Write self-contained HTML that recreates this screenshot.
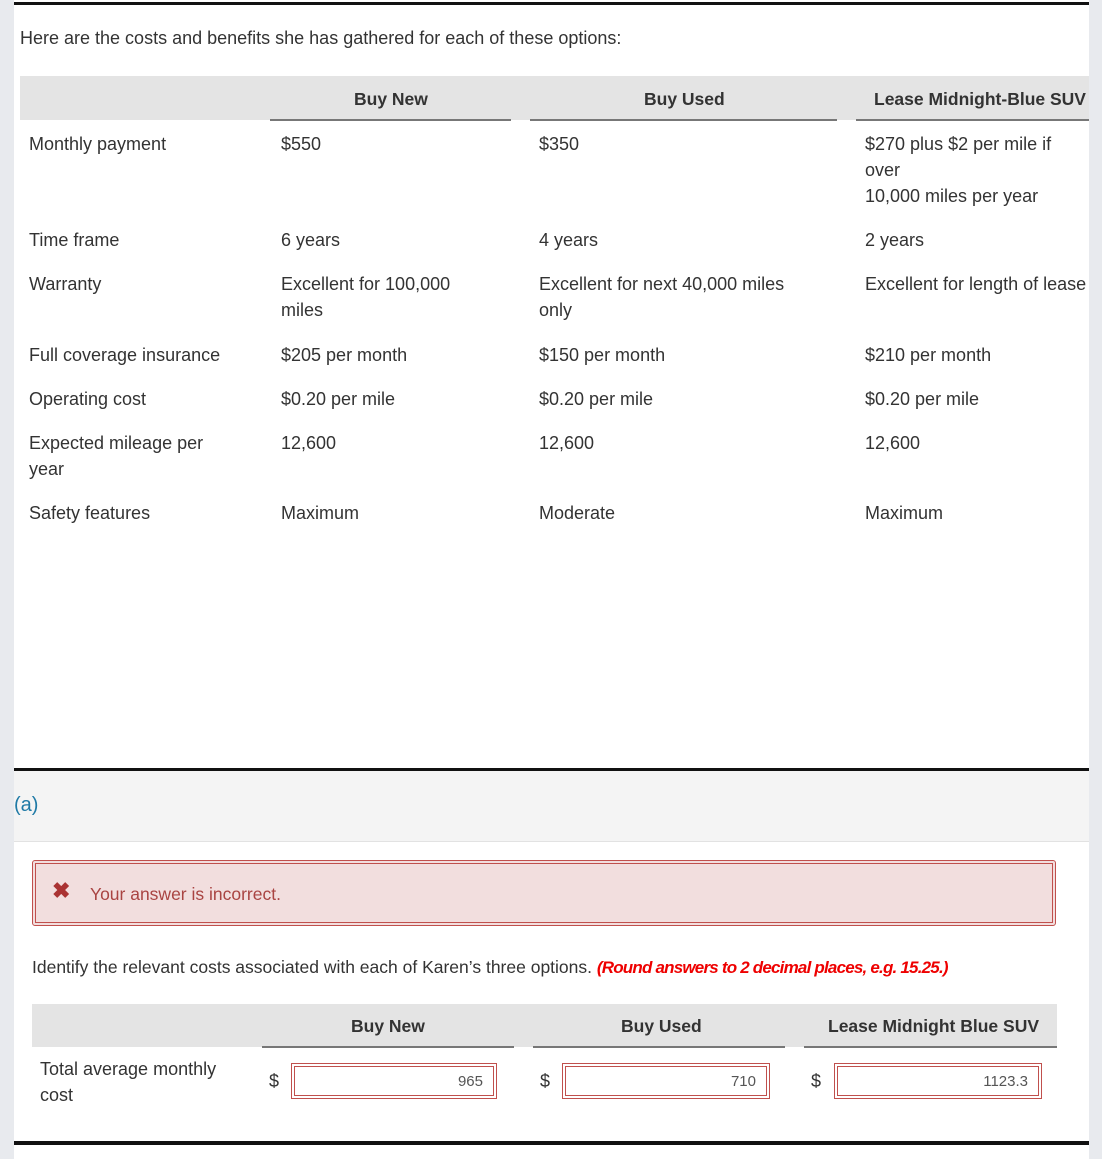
<!DOCTYPE html><html><head><style>
body{margin:0;width:1102px;height:1159px;position:relative;background:#fff;font-family:"Liberation Sans",sans-serif;color:#333;font-size:18px;overflow:hidden}
.a{position:absolute;white-space:nowrap;line-height:26px}
.h{font-weight:bold;color:#333;font-size:17.5px}
.ul{position:absolute;height:2px;background:#777}
.inp{position:absolute;height:30px;border:1px solid #c0504d;outline:1px solid #c0504d;outline-offset:2px;background:#fff;font-size:15px;color:#555;text-align:right;line-height:30px;padding-right:10px;box-sizing:border-box}
</style></head><body>
<div style="position:absolute;left:0;top:0;width:14px;height:1159px;background:#e8eaee"></div>
<div style="position:absolute;left:1089px;top:0;width:13px;height:1159px;background:#e8eaee"></div>
<div style="position:absolute;left:14px;top:2px;width:1075px;height:3px;background:#111"></div>
<div class="a" style="left:20px;top:25px">Here are the costs and benefits she has gathered for each of these options:</div>
<div style="position:absolute;left:20px;top:76px;width:1069px;height:44px;background:#e4e4e4"></div>
<div class="a h" style="left:354px;top:86px">Buy New</div>
<div class="a h" style="left:644px;top:86px">Buy Used</div>
<div class="a h" style="left:874px;top:86px">Lease Midnight-Blue SUV</div>
<div class="ul" style="left:270px;top:119px;width:241px"></div>
<div class="ul" style="left:530px;top:119px;width:307px"></div>
<div class="ul" style="left:856px;top:119px;width:233px"></div>
<div class="a" style="left:29px;top:131px">Monthly payment</div>
<div class="a" style="left:281px;top:131px">$550</div>
<div class="a" style="left:539px;top:131px">$350</div>
<div class="a" style="left:865px;top:131px">$270 plus $2 per mile if<br>over<br>10,000 miles per year</div>
<div class="a" style="left:29px;top:227px">Time frame</div>
<div class="a" style="left:281px;top:227px">6 years</div>
<div class="a" style="left:539px;top:227px">4 years</div>
<div class="a" style="left:865px;top:227px">2 years</div>
<div class="a" style="left:29px;top:271px">Warranty</div>
<div class="a" style="left:281px;top:271px">Excellent for 100,000<br>miles</div>
<div class="a" style="left:539px;top:271px">Excellent for next 40,000 miles<br>only</div>
<div class="a" style="left:865px;top:271px">Excellent for length of lease</div>
<div class="a" style="left:29px;top:342px">Full coverage insurance</div>
<div class="a" style="left:281px;top:342px">$205 per month</div>
<div class="a" style="left:539px;top:342px">$150 per month</div>
<div class="a" style="left:865px;top:342px">$210 per month</div>
<div class="a" style="left:29px;top:386px">Operating cost</div>
<div class="a" style="left:281px;top:386px">$0.20 per mile</div>
<div class="a" style="left:539px;top:386px">$0.20 per mile</div>
<div class="a" style="left:865px;top:386px">$0.20 per mile</div>
<div class="a" style="left:29px;top:430px">Expected mileage per<br>year</div>
<div class="a" style="left:281px;top:430px">12,600</div>
<div class="a" style="left:539px;top:430px">12,600</div>
<div class="a" style="left:865px;top:430px">12,600</div>
<div class="a" style="left:29px;top:500px">Safety features</div>
<div class="a" style="left:281px;top:500px">Maximum</div>
<div class="a" style="left:539px;top:500px">Moderate</div>
<div class="a" style="left:865px;top:500px">Maximum</div>
<div style="position:absolute;left:14px;top:768px;width:1075px;height:3px;background:#111"></div>
<div style="position:absolute;left:14px;top:771px;width:1075px;height:70px;background:#f4f4f4;border-bottom:1px solid #e2e2e2"></div>
<div class="a" style="left:14px;top:792px;font-size:20px;color:#1f7aa6">(a)</div>
<div style="position:absolute;left:32px;top:860px;width:1024px;height:66px;box-sizing:border-box;border:1px solid #c0504d;outline:1px solid #c0504d;outline-offset:-4px;background:#f2dede;border-radius:3px"></div>
<div class="a" style="left:52px;top:878px;font-size:22px;font-weight:bold;color:#a33">✖</div>
<div class="a" style="left:90px;top:881px;color:#a94442;font-size:17.5px">Your answer is incorrect.</div>
<div class="a" style="left:32px;top:954px;font-size:17.5px">Identify the relevant costs associated with each of Karen’s three options. <b style="color:#e00;font-style:italic;font-size:17px;letter-spacing:-0.8px">(Round answers to 2 decimal places, e.g. 15.25.)</b></div>
<div style="position:absolute;left:32px;top:1004px;width:1025px;height:43px;background:#e4e4e4"></div>
<div class="a h" style="left:351px;top:1013px">Buy New</div>
<div class="a h" style="left:621px;top:1013px">Buy Used</div>
<div class="a h" style="left:828px;top:1013px">Lease Midnight Blue SUV</div>
<div class="ul" style="left:262px;top:1046px;width:252px"></div>
<div class="ul" style="left:533px;top:1046px;width:252px"></div>
<div class="ul" style="left:804px;top:1046px;width:253px"></div>
<div class="a" style="left:40px;top:1056px">Total average monthly<br>cost</div>
<div class="a" style="left:269px;top:1068px">$</div>
<div class="inp" style="left:294px;top:1066px;width:200px">965</div>
<div class="a" style="left:540px;top:1068px">$</div>
<div class="inp" style="left:565px;top:1066px;width:202px">710</div>
<div class="a" style="left:811px;top:1068px">$</div>
<div class="inp" style="left:837px;top:1066px;width:202px">1123.3</div>
<div style="position:absolute;left:14px;top:1141px;width:1075px;height:4px;background:#111"></div>
</body></html>
